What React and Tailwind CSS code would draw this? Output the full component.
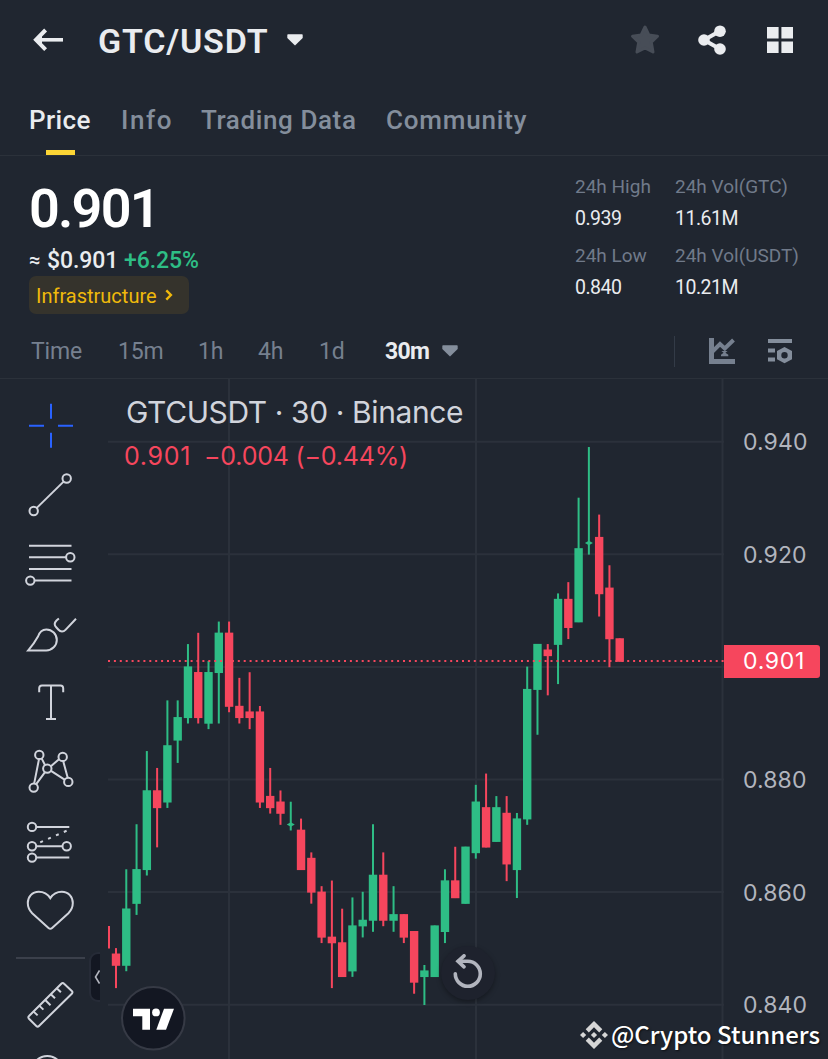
import { useState } from "react";

const TABS = [
  { label: "Price", className: "w-[92px] tracking-[0.4px]" },
  { label: "Info", className: "w-[80px] tracking-[1.6px]" },
  { label: "Trading Data", className: "w-[185px] tracking-[0.6px]" },
  { label: "Community", className: "tracking-[0.8px]" },
];

const INTERVALS = [
  { label: "Time", className: "w-[87px]" },
  { label: "15m", className: "w-[80px]" },
  { label: "1h", className: "w-[60px]" },
  { label: "4h", className: "w-[61px]" },
  { label: "1d", className: "w-[66px]" },
];

const STATS = [
  [
    { label: "24h High", value: "0.939" },
    { label: "24h Low", value: "0.840" },
  ],
  [
    { label: "24h Vol(GTC)", value: "11.61M" },
    { label: "24h Vol(USDT)", value: "10.21M" },
  ],
];

// [open, high, low, close] in thousandths of a USDT
const CANDLES = [
  [849, 850, 843, 847],
  [847, 864, 846, 857],
  [858, 872, 856, 864],
  [864, 885, 863, 878],
  [878, 882, 868, 875],
  [876, 894, 875, 886],
  [887, 894, 883, 891],
  [891, 904, 890, 900],
  [899, 906, 890, 891],
  [890, 901, 889, 899],
  [899, 908, 890, 906],
  [906, 908, 892, 893],
  [893, 898, 890, 891],
  [892, 899, 889, 891],
  [892, 893, 875, 876],
  [877, 882, 874, 875],
  [876, 878, 872, 874],
  [872, 876, 871, 872],
  [871, 873, 864, 864],
  [866, 867, 858, 860],
  [860, 861, 851, 852],
  [852, 862, 843, 851],
  [851, 857, 845, 845],
  [846, 859, 845, 854],
  [854, 860, 852, 855],
  [855, 872, 853, 863],
  [863, 867, 854, 855],
  [855, 861, 853, 856],
  [856, 856, 851, 852],
  [853, 853, 842, 844],
  [845, 847, 840, 846],
  [845, 854, 845, 854],
  [853, 864, 851, 862],
  [862, 868, 859, 859],
  [858, 868, 858, 868],
  [867, 879, 866, 876],
  [875, 881, 868, 868],
  [869, 877, 869, 875],
  [874, 877, 862, 865],
  [864, 874, 859, 873],
  [873, 900, 872, 896],
  [896, 904, 888, 904],
  [903, 904, 895, 902],
  [904, 913, 897, 912],
  [912, 915, 905, 907],
  [908, 930, 908, 921],
  [922, 939, 920, 922],
  [923, 927, 909, 913],
  [914, 918, 900, 905],
  [905, 905, 901, 901],
];

const GRID = [940, 920, 900, 880, 860, 840];
const AXIS = ["0.940", "0.920", "", "0.880", "0.860", "0.840"];

const GREEN = "#2ebd85";
const RED = "#f6465d";

const priceY = (p) => 62.7 + (940 - p) * 5.63;

function Header() {
  return (
    <header className="flex h-[80px] items-center pl-[33px] pr-[35px]">
      <svg width="30" height="24" viewBox="0 0 30 24" fill="none">
        <path d="M3.5 11.8H30" stroke="#eaecef" strokeWidth="3.6" />
        <path d="M12.6 2L3 11.8L12.6 21.6" stroke="#eaecef" strokeWidth="4" />
        <path d="M1 11.8L9 4.5V19Z" fill="#eaecef" />
      </svg>
      <h1 className="ml-[35px] mt-[2px] w-[189px] text-[34px] font-semibold leading-[40px] tracking-[0.8px] text-[#eaecef]">
        GTC/USDT
      </h1>
      <svg width="16" height="12" viewBox="0 0 16 12">
        <path d="M1 0.3H15Q15.7 0.3 15.7 1V4L8 11.5L0.3 4V1Q0.3 0.3 1 0.3Z" fill="#eaecef" />
      </svg>
      <svg width="30" height="30" viewBox="0 0 30 30" className="ml-auto">
        <path
          d="M15 2L18.8 10L27.5 11.2L21.3 17.3L23 27L15 22.8L7 27L8.7 17.3L2.5 11.2L11.2 10Z"
          fill="#474d57"
          stroke="#474d57"
          strokeWidth="3"
          strokeLinejoin="round"
        />
      </svg>
      <svg width="28" height="30" viewBox="0 0 28 30" className="ml-[38px]" fill="#eaecef">
        <path d="M22 6L6 15L22 24" fill="none" stroke="#eaecef" strokeWidth="4" />
        <circle cx="22" cy="6.2" r="5.8" />
        <circle cx="6" cy="15" r="5.8" />
        <circle cx="22" cy="24" r="5.8" />
      </svg>
      <svg width="26" height="26" viewBox="0 0 26 26" className="ml-[41px]" fill="#eaecef">
        <path d="M0 0H11.6V11.6H0ZM14.4 0H26V11.6H14.4ZM0 14.4H11.6V26H0ZM14.4 14.4H26V26H14.4Z" />
      </svg>
    </header>
  );
}

function Tabs() {
  const [active, setActive] = useState("Price");
  return (
    <nav className="flex h-[76px] border-b border-[#2b313a] pl-[29px] text-[26px] font-medium leading-[80px]">
      {TABS.map((tab) => (
        <button
          key={tab.label}
          onClick={() => setActive(tab.label)}
          className={`relative h-[75px] text-left ${tab.className} ${
            active === tab.label ? "text-[#eaecef]" : "text-[#848e9c]"
          }`}
        >
          {tab.label}
          {active === tab.label && (
            <span className="absolute bottom-0 left-[17px] h-[5px] w-[29px] bg-[#fcd535]" />
          )}
        </button>
      ))}
    </nav>
  );
}

function Summary() {
  return (
    <section className="flex h-[168px]">
      <div className="w-[575px] pl-[29px] pt-[26px]">
        <div className="h-[54px] text-[54px] font-semibold leading-[54px] tracking-[-1.8px] text-white">
          0.901
        </div>
        <div className="mt-[9px] flex h-[31px] items-center text-[23px] font-medium leading-[31px]">
          <span className="w-[18px] text-[20px] text-[#eaecef]">≈</span>
          <span className="w-[77px] tracking-[-0.1px] text-[#eaecef]">$0.901</span>
          <span className="tracking-[-0.1px] text-[#2ebd85]">+6.25%</span>
        </div>
        <div className="flex h-[38px] w-[160px] items-center rounded-[7px] bg-[#35332c] pl-[7px] text-[20px] text-[#f0b90b]">
          <span className="pt-px">Infrastructure</span>
          <svg width="8" height="12" viewBox="0 0 8 12" className="ml-[8px]" fill="none">
            <path d="M1.3 1.3L5.9 6L1.3 10.7" stroke="#f0b90b" strokeWidth="2.4" />
          </svg>
        </div>
      </div>
      {STATS.map((column, i) => (
        <div key={i} className="w-[100px] pt-[16px]">
          {column.map((stat) => (
            <div key={stat.label} className="mb-[8px] whitespace-nowrap">
              <div className="h-[30px] text-[19px] leading-[30px] text-[#707a8a]">
                {stat.label}
              </div>
              <div className="h-[31px] pt-px text-[19.5px] leading-[31px] tracking-[-0.5px] text-[#eaecef]">
                {stat.value}
              </div>
            </div>
          ))}
        </div>
      ))}
    </section>
  );
}

function IntervalBar() {
  return (
    <div className="flex h-[55px] items-center border-b border-[#2b313a] pl-[31px] pr-[36px] text-[23px] tracking-[-0.2px] text-[#76808f]">
      {INTERVALS.map((it) => (
        <button key={it.label} className={`pt-[2px] text-left ${it.className}`}>
          {it.label}
        </button>
      ))}
      <button className="w-[57px] pt-[2px] text-left font-bold tracking-[-0.7px] text-[#eaecef]">30m</button>
      <svg width="16" height="12" viewBox="0 0 16 12">
        <path d="M1 0.3H15Q15.7 0.3 15.7 1V4L8 11.5L0.3 4V1Q0.3 0.3 1 0.3Z" fill="#848e9c" />
      </svg>
      <span className="ml-auto h-[31px] w-px bg-[#333b47]" />
      <svg width="26" height="26" viewBox="0 0 26 26" className="ml-[34px]" fill="#76808f">
        <path d="M0 0H5V21H26V26H0Z" />
        <path d="M3 14L11 6L15.8 10.5L24.5 2" fill="none" stroke="#76808f" strokeWidth="4" />
        <path d="M12 18.2V16.8L14.6 14.8L12.4 13H18.6L16.4 14.8L19.3 16.8V18.2Z" />
      </svg>
      <svg width="24" height="26" viewBox="0 0 24 26" className="ml-[33px]" fill="#848e9c">
        <path d="M0 1H24V5H0ZM0 10.5H7V14.5H0ZM0 19.5H7V23.5H0Z" />
        <path
          fillRule="evenodd"
          d="M16.5 9L24 13V21.3L16.5 25.3L9 21.3V13ZM16.5 14A3.2 3.2 0 1 0 16.5 20.4A3.2 3.2 0 1 0 16.5 14Z"
        />
      </svg>
    </div>
  );
}

const TOOLS = [
  <path key="cross" stroke="#2962ff" d="M8 30.8H23M37 30.8H52M30 8.8V23.8M30 37.8V52.8" />,
  <g key="line">
    <path d="M15.8 42.9L42.6 16.6" />
    <circle cx="45.7" cy="13.5" r="4.2" />
    <circle cx="12.7" cy="46" r="4.2" />
  </g>,
  <g key="fib">
    <path d="M8 11.8H50.5M8 23.3H45M8 35H50.5M13.2 46.6H50.5" />
    <circle cx="49.3" cy="23.3" r="4.2" />
    <circle cx="9.3" cy="46.6" r="4.2" />
  </g>,
  <g key="brush">
    <path d="M7.2 46.4C12 41 14.5 37 17 32.5C18.5 28 21 25.4 25.3 25.4A10.5 10.5 0 0 1 25.3 46.4Z" />
    <path d="M37.9 14.5L35.5 16.5C33 19 33.2 21.3 35.2 23.3L37.5 25.8C39.5 28 42.5 28 44.5 25.8L55 14.7" />
  </g>,
  <path key="text" d="M18.2 19.3V15.3Q18.2 12.5 21 12.5H39.5Q42.2 12.5 42.2 15.3V19.3M30 12.5V46M25 46H35" />,
  <g key="pattern">
    <path d="M18 17.1L13.2 41.4M20.6 16.4L24 23M38 17.2L29.9 24.2M42.2 19.1L46.7 35.7M30 28.9L43.6 37.7M24 30.2L15.2 42.1" />
    <circle cx="18.3" cy="12.9" r="4.2" />
    <circle cx="41.7" cy="14.9" r="4.2" />
    <circle cx="26.3" cy="26.6" r="4.2" />
    <circle cx="12.7" cy="45.6" r="4.2" />
    <circle cx="47.3" cy="39.9" r="4.2" />
  </g>,
  <g key="forecast">
    <path d="M15.2 14.9H48.3M15.2 34.2H41.5M15.2 45.6H48.3" />
    <path d="M19.2 30.3L46 18.6" strokeDasharray="3 5.6" />
    <circle cx="11" cy="14.9" r="4.2" />
    <circle cx="11" cy="34.2" r="4.2" />
    <circle cx="45.7" cy="34.2" r="4.2" />
    <circle cx="11" cy="45.6" r="4.2" />
  </g>,
  <path
    key="heart"
    d="M29.3 17.1C26 12 21.5 10.7 17.8 10.7C11 10.7 6.8 16 6.8 22C6.8 27 9 30 11.2 32.2L27.5 47Q29.3 48.6 31.1 47L47.4 32.2C49.6 30 51.8 27 51.8 22C51.8 16 47.6 10.7 40.8 10.7C37.1 10.7 32.6 12 29.3 17.1Z"
  />,
];

function Toolbar() {
  return (
    <aside className="relative flex h-[680px] w-[108px] flex-col overflow-hidden pt-[11.8px]">
      {TOOLS.map((tool, i) => (
        <div key={i} className="flex h-[69.4px] shrink-0 items-center pl-[21px]">
          <svg width="60" height="60" viewBox="0 0 60 60" fill="none" stroke="#d1d4dc" strokeWidth="2">
            {tool}
          </svg>
        </div>
      ))}
      <div className="ml-[16px] mt-[11px] h-[2px] w-[69px] shrink-0 bg-[#3b404b]" />
      <svg
        width="60"
        height="60"
        viewBox="0 0 60 60"
        fill="none"
        stroke="#d1d4dc"
        strokeWidth="2"
        strokeLinejoin="round"
        className="ml-[21px] mt-[15px] shrink-0"
      >
        <path d="M40.3 9.7Q41.7 8.3 43.1 9.7L50.8 17Q52.2 18.3 50.8 19.7L18 52Q16.7 53.3 15.3 52L8 44.7Q6.6 43.3 8 42Z" />
        <path d="M35.7 14.3L39.9 18.3M29.8 20.2L34 24.2M24 25.8L29.5 31.3M18.2 31.6L22.4 35.6M12.4 37.4L16.6 41.4" />
      </svg>
      <svg
        width="60"
        height="60"
        viewBox="0 0 60 60"
        fill="none"
        stroke="#d1d4dc"
        strokeWidth="2"
        className="ml-[21px] shrink-0"
      >
        <circle cx="26.3" cy="37.5" r="15.5" />
      </svg>
      <button className="absolute left-[89px] top-[573px] h-[50px] w-[11px] rounded-l-[9px] border-2 border-r-0 border-[#262b37] bg-[#131722]">
        <svg width="6" height="16" viewBox="0 0 6 16" fill="none" className="ml-[3px]">
          <path d="M5.5 1.5L1.5 8L5.5 14.5" stroke="#b2b5be" strokeWidth="1.6" />
        </svg>
      </button>
    </aside>
  );
}

function Candles() {
  return (
    <svg width="616" height="680" viewBox="0 0 616 680" className="absolute left-0 top-0">
      {GRID.map((p) => (
        <path key={p} d={`M0 ${priceY(p)}H616`} stroke="#2b313b" strokeWidth="2" />
      ))}
      <path d="M121 0V680M368 0V680M614.5 0V680" stroke="#2b313b" strokeWidth="2" />
      <path d={`M1 ${priceY(854)}V${priceY(850)}`} stroke={RED} strokeWidth="2" />
      {CANDLES.map(([open, high, low, close], i) => {
        const x = 8 + i * 10.28;
        const color = close >= open ? GREEN : RED;
        const top = priceY(Math.max(open, close)) - 0.5;
        const bottom = priceY(Math.min(open, close)) + 0.5;
        return (
          <g key={i} fill={color}>
            <rect x={x - 1} y={priceY(high) - 0.3} width="2" height={(high - low) * 5.63 + 0.6} />
            {open === close ? (
              <path
                d={`M${x - 4} ${top + 0.5}L${x} ${top - 1.8}L${x + 4} ${top + 0.5}L${x} ${top + 2.8}Z`}
              />
            ) : (
              <rect x={x - 4.2} y={top} width="8.4" height={bottom - top} />
            )}
          </g>
        );
      })}
      <path d="M0 282H616" stroke={RED} strokeWidth="2" strokeDasharray="2 3.9" />
    </svg>
  );
}

function Legend() {
  return (
    <div className="relative pl-[16px] pt-[13px] font-['Inter',sans-serif]">
      <div className="h-[40px] pl-[2px] text-[30px] leading-[40px] tracking-[-0.4px] text-[#d1d4dc]">
        GTCUSDT · 30 · Binance
      </div>
      <div className="mt-[7px] flex h-[34px] text-[25px] leading-[34px] text-[#f6465d]">
        <span className="w-[80px] tracking-[0.7px]">0.901</span>
        <span className="tracking-[-0.2px]">−0.004 (−0.44%)</span>
      </div>
    </div>
  );
}

function ResetButton() {
  return (
    <button className="absolute left-[333px] top-[567px] flex h-[54px] w-[54px] items-center justify-center rounded-full bg-[#1e222d] shadow-[0_2px_5px_rgba(0,0,0,0.35)]">
      <svg width="34" height="38" viewBox="0 0 34 38" fill="none" stroke="#b2b5be" strokeWidth="3.6" strokeLinecap="round">
        <path d="M4.3 19.8A12.5 12.5 0 1 0 16.8 7.3H7.5" />
        <path d="M13 1.8L7 7.3L13 12.8" />
      </svg>
    </button>
  );
}

function TradingViewBadge() {
  return (
    <svg width="66" height="66" viewBox="0 0 66 66" className="absolute left-[12px] top-[606px]">
      <circle cx="33.3" cy="33.3" r="31.3" fill="#131722" stroke="#363a45" strokeWidth="2" />
      <g fill="#fff">
        <path d="M13 23.7H30V44.7H22.3V31.3H13Z" />
        <circle cx="36" cy="27.4" r="3.9" />
        <path d="M44 23.7H54L46 44.7H36.3Z" />
      </g>
    </svg>
  );
}

function PriceAxis() {
  return (
    <div className="relative w-[104px] pt-[7.2px] font-['Inter',sans-serif] text-[23px] tracking-[0.1px] text-[#b2b5be]">
      {AXIS.map((label, i) => (
        <div key={i} className="flex h-[112.6px] items-center pl-[19px]">
          {label}
        </div>
      ))}
      <div className="absolute left-0 top-[266px] flex h-[33px] w-[96px] items-center rounded-r-[3px] bg-[#f6465d] pl-[19px] tracking-[0.7px] text-white">
        0.901
      </div>
    </div>
  );
}

function Watermark() {
  return (
    <div className="absolute bottom-[6px] right-[8px] flex items-center">
      <svg width="28" height="28" viewBox="0 0 28 28" fill="#d6d6d6">
        <path d="M14 0L22.3 8.3L19.2 11.4L14 6.2L8.8 11.4L5.7 8.3Z" />
        <path d="M14 28L22.3 19.7L19.2 16.6L14 21.8L8.8 16.6L5.7 19.7Z" />
        <path d="M3.1 10.9L6.2 14L3.1 17.1L0 14ZM24.9 10.9L28 14L24.9 17.1L21.8 14ZM14 10.9L17.1 14L14 17.1L10.9 14Z" />
      </svg>
      <span className="ml-[3px] h-[36px] font-['Noto_Sans_CJK_SC','Noto_Sans',sans-serif] text-[24px] font-medium leading-[34px] text-white [text-shadow:1px_1px_2px_rgba(0,0,0,0.6)]">
        @Crypto Stunners
      </span>
    </div>
  );
}

export default function App() {
  return (
    <div className="relative h-[1059px] w-[828px] overflow-hidden bg-[#202630] font-['Roboto',sans-serif]">
      <Header />
      <Tabs />
      <Summary />
      <IntervalBar />
      <main className="flex h-[680px]">
        <Toolbar />
        <div className="relative w-[616px]">
          <Candles />
          <Legend />
          <ResetButton />
          <TradingViewBadge />
        </div>
        <PriceAxis />
      </main>
      <Watermark />
    </div>
  );
}
